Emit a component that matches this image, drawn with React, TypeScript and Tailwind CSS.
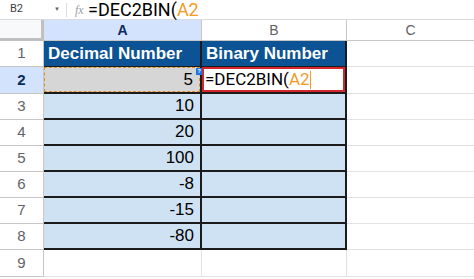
import React from 'react';

const rows = ['10', '20', '100', '-8', '-15', '-80'];

function RowHead({ n, active }: { n: number; active?: boolean }) {
  return (
    <div
      className={`w-[44px] shrink-0 flex items-center justify-center border-r border-b border-[#c7c7c7] text-[15px] ${
        active ? 'bg-[#d3e3fd] text-[#0b2a5b] font-bold' : 'bg-white text-[#5f6368]'
      }`}
    >
      {n}
    </div>
  );
}

export default function App() {
  return (
    <div className="w-[474px] h-[279px] overflow-hidden bg-white text-black" style={{ fontFamily: '"Liberation Sans", Arial, sans-serif' }}>
      {/* formula bar */}
      <div className="h-[20px] flex items-center border-b border-[#dadce0] bg-white">
        <div className="w-[54px] pl-[10px] text-[11px] text-[#3c4043]" style={{ fontFamily: 'Roboto, sans-serif' }}>B2</div>
        <div className="w-[12px] text-[6px] text-[#5f6368]">▼</div>
        <div className="h-[14px] w-px bg-[#dadce0] mr-[8px]" />
        <div className="w-[13px] text-[12px] italic text-[#9aa0a6]" style={{ fontFamily: '"Liberation Serif", serif' }}>fx</div>
        <div className="text-[18px] leading-none" style={{ fontFamily: 'Roboto, sans-serif' }}>
          =DEC2BIN(<span className="text-[#f29b26]">A2</span>
        </div>
      </div>

      {/* column headers */}
      <div className="h-[21px] flex">
        <div className="w-[44px] shrink-0 bg-[#f8f9fa] border-r-[3px] border-b-[3px] border-[#c0c0c0]" />
        <div className="w-[158px] shrink-0 flex items-center justify-center bg-[#d3e3fd] border-r border-b border-[#c7c7c7] text-[14px] font-bold text-[#0b2a5b]">A</div>
        <div className="w-[145px] shrink-0 flex items-center justify-center bg-white border-r border-b border-[#c7c7c7] text-[14px] text-[#5f6368]">B</div>
        <div className="flex-1 flex items-center justify-center bg-white border-b border-[#c7c7c7] text-[14px] text-[#5f6368]">C</div>
      </div>

      {/* row 1 */}
      <div className="h-[26px] flex">
        <RowHead n={1} />
        <div className="w-[158px] shrink-0 bg-[#0b5394] border-r-2 border-b border-[#1b1b1b] flex items-center pl-[4px] text-[17px] font-bold text-white">Decimal Number</div>
        <div className="w-[145px] shrink-0 bg-[#0b5394] border-r-2 border-b border-[#1b1b1b] flex items-center pl-[4px] text-[17px] font-bold text-white">Binary Number</div>
        <div className="flex-1 border-b border-[#e2e2e2]" />
      </div>

      {/* row 2 */}
      <div className="h-[27px] flex">
        <RowHead n={2} active />
        <div className="relative w-[158px] shrink-0 bg-[#cfe2f3] border-r-2 border-b-2 border-[#1b1b1b]">
          <div className="absolute inset-0 bg-[#d6d6d6] border border-dashed border-[#d98e2a] flex items-center justify-end pr-[6px] text-[17px]">5</div>
          <div className="absolute right-[-2px] top-[1px] w-[6px] h-[7px] bg-[#1a73e8] text-white text-[6px] leading-[7px] text-center font-bold">?</div>
        </div>
        <div className="w-[145px] shrink-0 bg-white border-r-2 border-b-2 border-[#1b1b1b]">
          <div className="h-full border-2 border-[#d3262e] flex items-center pl-[1px] text-[17px]" style={{ fontFamily: 'Roboto, sans-serif' }}>
            =DEC2BIN(<span className="text-[#f29b26]">A2</span>
            <span className="inline-block w-px h-[18px] bg-[#f29b26]" />
          </div>
        </div>
        <div className="flex-1 border-b border-[#e2e2e2]" />
      </div>

      {rows.map((v, i) => (
        <div key={v} className="h-[26px] flex">
          <RowHead n={i + 3} />
          <div className="w-[158px] shrink-0 bg-[#cfe2f3] border-r-2 border-b-2 border-[#1b1b1b] flex items-center justify-end pr-[6px] text-[17px]">{v}</div>
          <div className="w-[145px] shrink-0 bg-[#cfe2f3] border-r-2 border-b-2 border-[#1b1b1b]" />
          <div className="flex-1 border-b border-[#e2e2e2]" />
        </div>
      ))}

      {/* row 9 */}
      <div className="h-[27px] flex">
        <RowHead n={9} />
        <div className="w-[158px] shrink-0 border-r border-b border-[#e2e2e2]" />
        <div className="w-[145px] shrink-0 border-r border-b border-[#e2e2e2]" />
        <div className="flex-1 border-b border-[#e2e2e2]" />
      </div>
    </div>
  );
}
